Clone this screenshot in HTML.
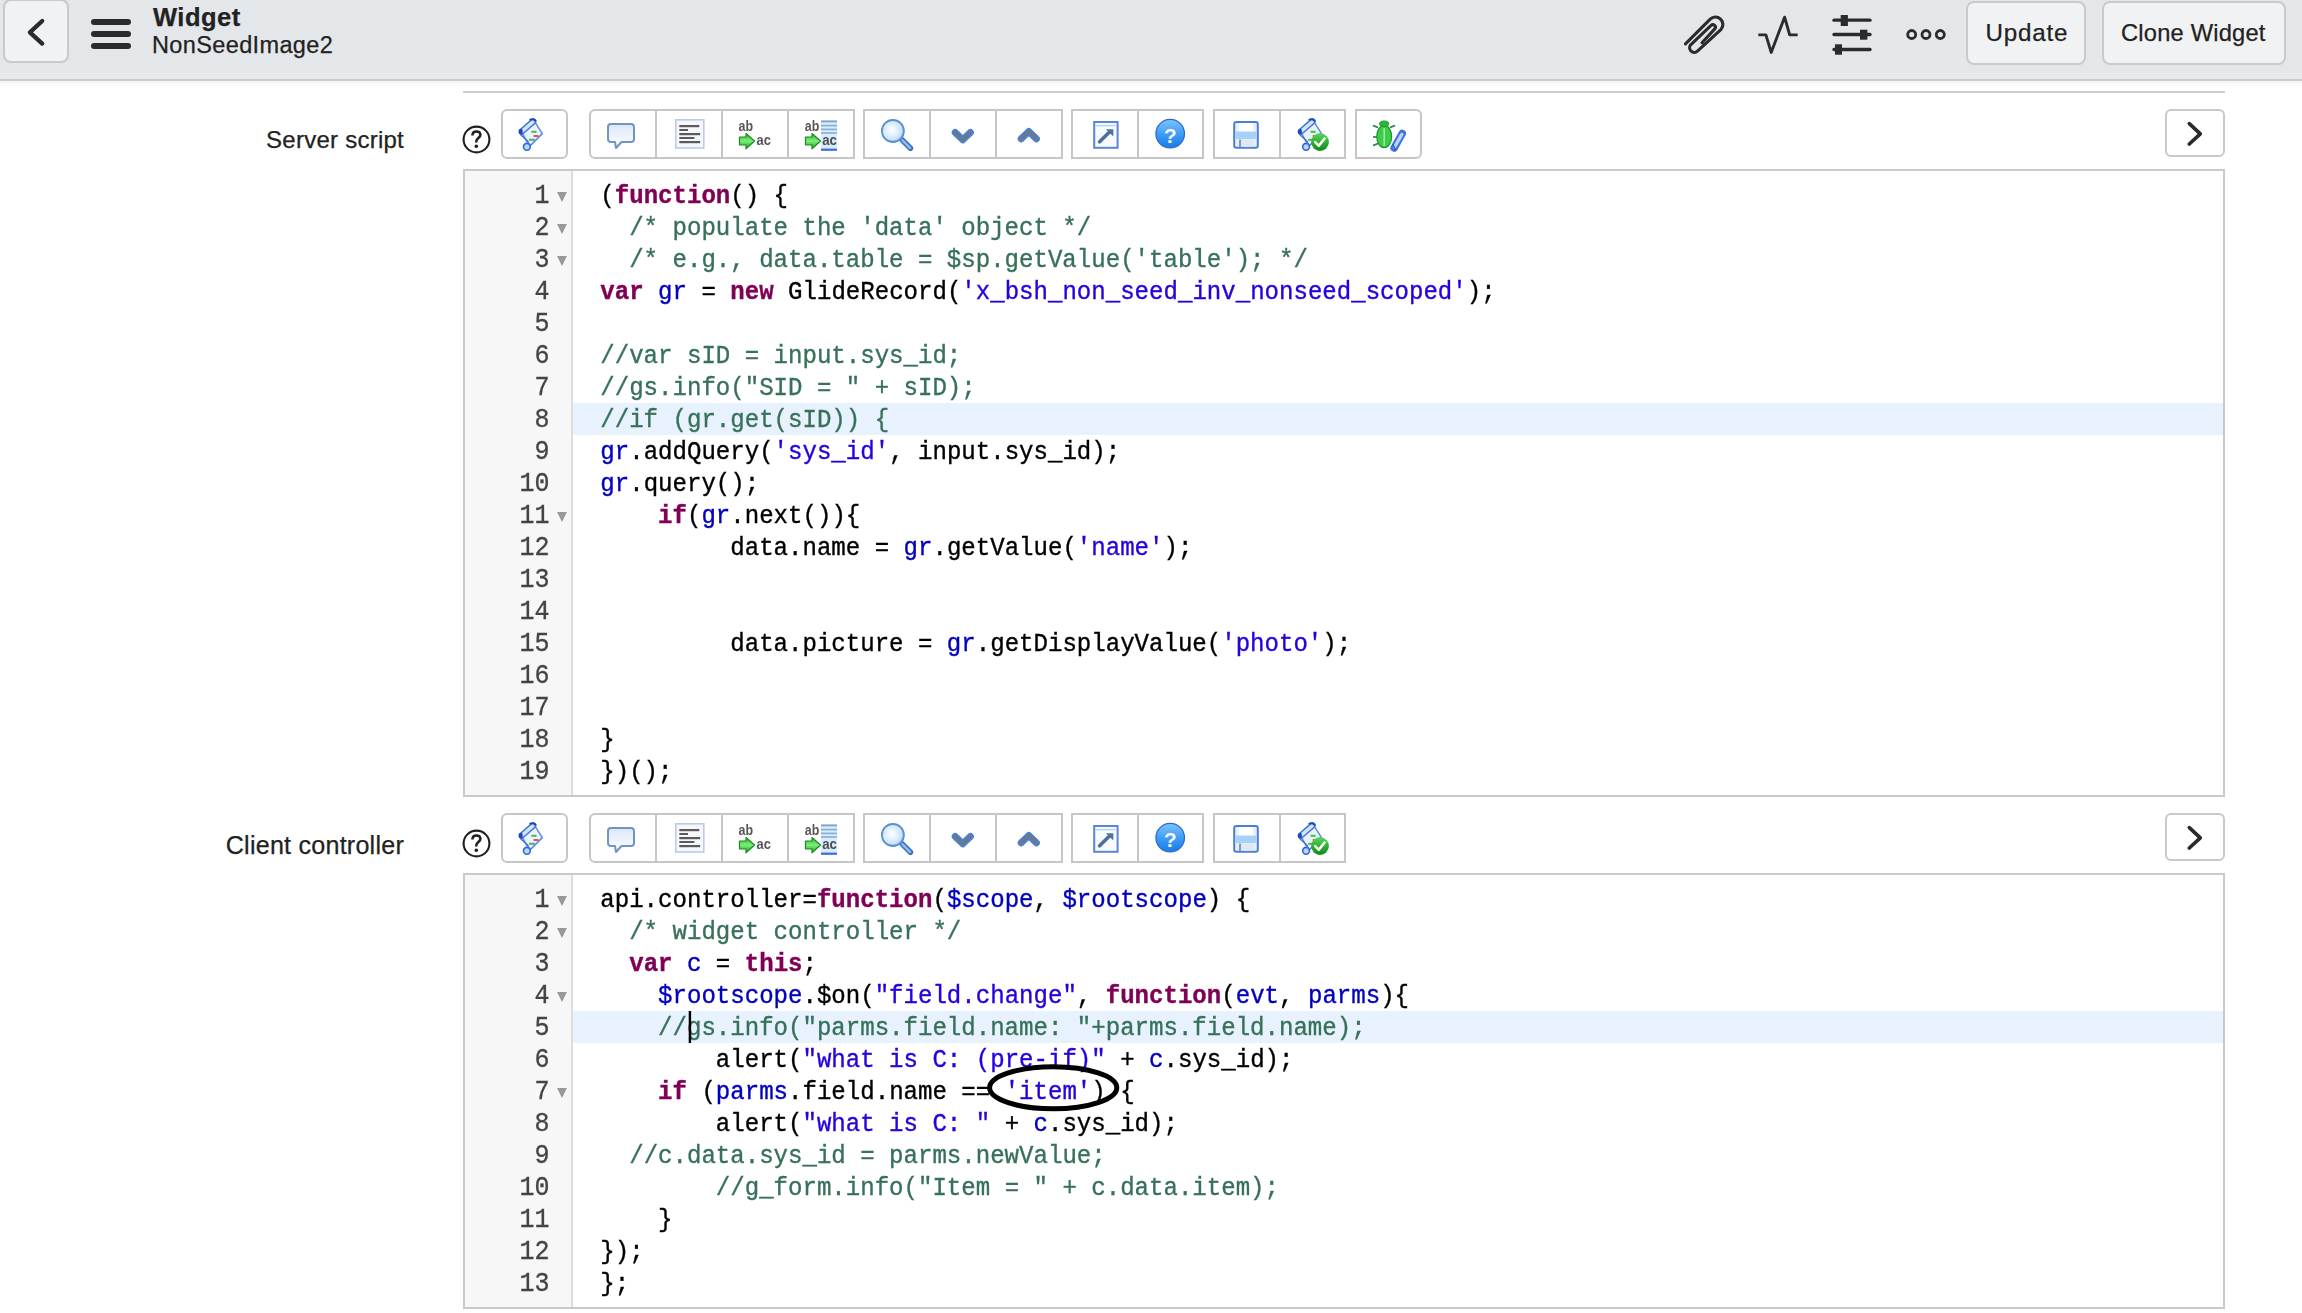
<!DOCTYPE html>
<html><head><meta charset="utf-8">
<style>
*{box-sizing:border-box}
html,body{margin:0;padding:0}
body{width:2302px;height:1313px;overflow:hidden;background:#fff;position:relative;font-family:"Liberation Sans",sans-serif;color:#2b2b2b}
.a{position:absolute}
#hdr{left:0;top:0;width:2302px;height:81px;background:#e4e7ea;border-bottom:2px solid #c9cbcd}
#shadow{left:0;top:81px;width:2302px;height:6px;background:linear-gradient(rgba(0,0,0,0.05),rgba(0,0,0,0))}
.hbtn{background:#f1f2f4;border:2px solid #c8cacc;border-radius:8px}
.lbl{white-space:nowrap;color:#222;line-height:32px;-webkit-text-stroke:0.25px #222}
.tb{border:2px solid #c6c6c6;background:#fff}
.rall{border-radius:6px}
.rleft{border-radius:6px 0 0 6px}
.rright{border-radius:0 6px 6px 0}
.ebtn{border:2px solid #c8c8c8;border-radius:6px;background:#fff}
.ed{border:2px solid #c9c9c9;background:#fff}
.gut{background:#f7f7f7;border-right:2px solid #ddd}
.code{font-family:"Liberation Mono",monospace;font-size:24.07px;line-height:32px;white-space:pre;color:#000;transform:scaleY(1.08);transform-origin:0 6px;-webkit-text-stroke:0.35px currentColor}
.ln{font-family:"Liberation Mono",monospace;font-size:25px;line-height:32px;white-space:pre;color:#444;text-align:right;transform:scaleY(1.11);transform-origin:0 6px;-webkit-text-stroke:0.3px currentColor}
.fold{width:0;height:0;border-left:5px solid transparent;border-right:5px solid transparent;border-top:10px solid #999}
.k{color:#7f0055;font-weight:bold}
.s{color:#2800e0}
.c{color:#377159}
.v{color:#0000c0}
.hl{background:#e8f2ff}

</style></head><body>

<div id="hdr" class="a"></div>
<div id="shadow" class="a"></div>
<div class="a" style="left:0;top:73px;width:2302px;height:6px;background:#e7eaed"></div>
<div class="a hbtn" style="left:3px;top:-1px;width:66px;height:64px"></div>
<div class="a lbl" style="left:153px;top:1px;font-size:25.5px;font-weight:bold;letter-spacing:0.5px">Widget</div>
<div class="a lbl" style="left:152px;top:28.5px;font-size:23.5px;letter-spacing:0.37px">NonSeedImage2</div>
<div class="a hbtn" style="left:1966px;top:1px;width:120px;height:64px"></div>
<div class="a lbl" style="left:1985.5px;top:16.5px;font-size:24.2px;letter-spacing:0.8px">Update</div>
<div class="a hbtn" style="left:2102px;top:1px;width:184px;height:64px"></div>
<div class="a lbl" style="left:2121px;top:16.5px;font-size:23.7px;letter-spacing:0.2px">Clone Widget</div>
<div class="a" style="left:463px;top:91px;width:1762px;height:2px;background:#cdcdcd"></div>
<div class="a lbl" style="right:1898px;top:124px;font-size:24px;letter-spacing:0.25px">Server script</div>
<div class="a lbl" style="right:1898px;top:829px;font-size:25.1px;letter-spacing:0.23px">Client controller</div>
<div class="a ebtn" style="left:2165px;top:109px;width:60px;height:48px"></div>
<div class="a ebtn" style="left:2165px;top:813px;width:60px;height:48px"></div>

<div class="a tb rall" style="left:501px;top:109px;width:67px;height:50px"></div>
<div class="a tb rleft" style="left:589px;top:109px;width:266px;height:50px"></div>
<div class="a" style="left:655px;top:109px;width:2px;height:50px;background:#c6c6c6"></div>
<div class="a" style="left:721px;top:109px;width:2px;height:50px;background:#c6c6c6"></div>
<div class="a" style="left:787px;top:109px;width:2px;height:50px;background:#c6c6c6"></div>
<div class="a tb " style="left:863px;top:109px;width:200px;height:50px"></div>
<div class="a" style="left:929px;top:109px;width:2px;height:50px;background:#c6c6c6"></div>
<div class="a" style="left:995px;top:109px;width:2px;height:50px;background:#c6c6c6"></div>
<div class="a tb " style="left:1071px;top:109px;width:133px;height:50px"></div>
<div class="a" style="left:1137px;top:109px;width:2px;height:50px;background:#c6c6c6"></div>
<div class="a tb " style="left:1213px;top:109px;width:133px;height:50px"></div>
<div class="a" style="left:1279px;top:109px;width:2px;height:50px;background:#c6c6c6"></div>
<div class="a tb rright" style="left:1355px;top:109px;width:67px;height:50px"></div>
<div class="a ed" style="left:463px;top:169px;width:1762px;height:628px"></div>
<div class="a gut" style="left:465px;top:171px;width:108px;height:624px"></div>
<div class="a hl" style="left:573px;top:403px;width:1650px;height:32px"></div>
<div class="a ln" style="left:480px;top:179px;width:69.5px">1</div>
<div class="a fold" style="left:557px;top:192px"></div>
<div class="a code" style="left:600.3px;top:179.6px">(<span class="k">function</span>() {</div>
<div class="a ln" style="left:480px;top:211px;width:69.5px">2</div>
<div class="a fold" style="left:557px;top:224px"></div>
<div class="a code" style="left:600.3px;top:211.6px"><span class="c">  /* populate the 'data' object */</span></div>
<div class="a ln" style="left:480px;top:243px;width:69.5px">3</div>
<div class="a fold" style="left:557px;top:256px"></div>
<div class="a code" style="left:600.3px;top:243.6px"><span class="c">  /* e.g., data.table = $sp.getValue('table'); */</span></div>
<div class="a ln" style="left:480px;top:275px;width:69.5px">4</div>
<div class="a code" style="left:600.3px;top:275.6px"><span class="k">var</span> <span class="v">gr</span> = <span class="k">new</span> GlideRecord(<span class="s">'x_bsh_non_seed_inv_nonseed_scoped'</span>);</div>
<div class="a ln" style="left:480px;top:307px;width:69.5px">5</div>
<div class="a ln" style="left:480px;top:339px;width:69.5px">6</div>
<div class="a code" style="left:600.3px;top:339.6px"><span class="c">//var sID = input.sys_id;</span></div>
<div class="a ln" style="left:480px;top:371px;width:69.5px">7</div>
<div class="a code" style="left:600.3px;top:371.6px"><span class="c">//gs.info("SID = " + sID);</span></div>
<div class="a ln" style="left:480px;top:403px;width:69.5px">8</div>
<div class="a code" style="left:600.3px;top:403.6px"><span class="c">//if (gr.get(sID)) {</span></div>
<div class="a ln" style="left:480px;top:435px;width:69.5px">9</div>
<div class="a code" style="left:600.3px;top:435.6px"><span class="v">gr</span>.addQuery(<span class="s">'sys_id'</span>, input.sys_id);</div>
<div class="a ln" style="left:480px;top:467px;width:69.5px">10</div>
<div class="a code" style="left:600.3px;top:467.6px"><span class="v">gr</span>.query();</div>
<div class="a ln" style="left:480px;top:499px;width:69.5px">11</div>
<div class="a fold" style="left:557px;top:512px"></div>
<div class="a code" style="left:600.3px;top:499.6px">    <span class="k">if</span>(<span class="v">gr</span>.next()){</div>
<div class="a ln" style="left:480px;top:531px;width:69.5px">12</div>
<div class="a code" style="left:600.3px;top:531.6px">         data.name = <span class="v">gr</span>.getValue(<span class="s">'name'</span>);</div>
<div class="a ln" style="left:480px;top:563px;width:69.5px">13</div>
<div class="a ln" style="left:480px;top:595px;width:69.5px">14</div>
<div class="a ln" style="left:480px;top:627px;width:69.5px">15</div>
<div class="a code" style="left:600.3px;top:627.6px">         data.picture = <span class="v">gr</span>.getDisplayValue(<span class="s">'photo'</span>);</div>
<div class="a ln" style="left:480px;top:659px;width:69.5px">16</div>
<div class="a ln" style="left:480px;top:691px;width:69.5px">17</div>
<div class="a ln" style="left:480px;top:723px;width:69.5px">18</div>
<div class="a code" style="left:600.3px;top:723.6px">}</div>
<div class="a ln" style="left:480px;top:755px;width:69.5px">19</div>
<div class="a code" style="left:600.3px;top:755.6px">})();</div>
<div class="a tb rall" style="left:501px;top:813px;width:67px;height:50px"></div>
<div class="a tb rleft" style="left:589px;top:813px;width:266px;height:50px"></div>
<div class="a" style="left:655px;top:813px;width:2px;height:50px;background:#c6c6c6"></div>
<div class="a" style="left:721px;top:813px;width:2px;height:50px;background:#c6c6c6"></div>
<div class="a" style="left:787px;top:813px;width:2px;height:50px;background:#c6c6c6"></div>
<div class="a tb " style="left:863px;top:813px;width:200px;height:50px"></div>
<div class="a" style="left:929px;top:813px;width:2px;height:50px;background:#c6c6c6"></div>
<div class="a" style="left:995px;top:813px;width:2px;height:50px;background:#c6c6c6"></div>
<div class="a tb " style="left:1071px;top:813px;width:133px;height:50px"></div>
<div class="a" style="left:1137px;top:813px;width:2px;height:50px;background:#c6c6c6"></div>
<div class="a tb " style="left:1213px;top:813px;width:133px;height:50px"></div>
<div class="a" style="left:1279px;top:813px;width:2px;height:50px;background:#c6c6c6"></div>
<div class="a ed" style="left:463px;top:873px;width:1762px;height:436px"></div>
<div class="a gut" style="left:465px;top:875px;width:108px;height:432px"></div>
<div class="a hl" style="left:573px;top:1011px;width:1650px;height:32px"></div>
<div class="a ln" style="left:480px;top:883px;width:69.5px">1</div>
<div class="a fold" style="left:557px;top:896px"></div>
<div class="a code" style="left:600.3px;top:883.6px">api.controller=<span class="k">function</span>(<span class="v">$scope</span>, <span class="v">$rootscope</span>) {</div>
<div class="a ln" style="left:480px;top:915px;width:69.5px">2</div>
<div class="a fold" style="left:557px;top:928px"></div>
<div class="a code" style="left:600.3px;top:915.6px"><span class="c">  /* widget controller */</span></div>
<div class="a ln" style="left:480px;top:947px;width:69.5px">3</div>
<div class="a code" style="left:600.3px;top:947.6px">  <span class="k">var</span> <span class="v">c</span> = <span class="k">this</span>;</div>
<div class="a ln" style="left:480px;top:979px;width:69.5px">4</div>
<div class="a fold" style="left:557px;top:992px"></div>
<div class="a code" style="left:600.3px;top:979.6px">    <span class="v">$rootscope</span>.$on(<span class="s">"field.change"</span>, <span class="k">function</span>(<span class="v">evt</span>, <span class="v">parms</span>){</div>
<div class="a ln" style="left:480px;top:1011px;width:69.5px">5</div>
<div class="a code" style="left:600.3px;top:1011.6px">    <span class="c">//gs.info("parms.field.name: "+parms.field.name);</span></div>
<div class="a ln" style="left:480px;top:1043px;width:69.5px">6</div>
<div class="a code" style="left:600.3px;top:1043.6px">        alert(<span class="s">"what is C: (pre-if)"</span> + <span class="v">c</span>.sys_id);</div>
<div class="a ln" style="left:480px;top:1075px;width:69.5px">7</div>
<div class="a fold" style="left:557px;top:1088px"></div>
<div class="a code" style="left:600.3px;top:1075.6px">    <span class="k">if</span> (<span class="v">parms</span>.field.name == <span class="s">'item'</span>) {</div>
<div class="a ln" style="left:480px;top:1107px;width:69.5px">8</div>
<div class="a code" style="left:600.3px;top:1107.6px">        alert(<span class="s">"what is C: "</span> + <span class="v">c</span>.sys_id);</div>
<div class="a ln" style="left:480px;top:1139px;width:69.5px">9</div>
<div class="a code" style="left:600.3px;top:1139.6px">  <span class="c">//c.data.sys_id = parms.newValue;</span></div>
<div class="a ln" style="left:480px;top:1171px;width:69.5px">10</div>
<div class="a code" style="left:600.3px;top:1171.6px">        <span class="c">//g_form.info("Item = " + c.data.item);</span></div>
<div class="a ln" style="left:480px;top:1203px;width:69.5px">11</div>
<div class="a code" style="left:600.3px;top:1203.6px">    }</div>
<div class="a ln" style="left:480px;top:1235px;width:69.5px">12</div>
<div class="a code" style="left:600.3px;top:1235.6px">});</div>
<div class="a ln" style="left:480px;top:1267px;width:69.5px">13</div>
<div class="a code" style="left:600.3px;top:1267.6px">};</div>
<svg class="a" style="left:0;top:0" width="2302" height="1313" viewBox="0 0 2302 1313">
<g fill="none" stroke="#2b2b2b" stroke-linecap="round" stroke-linejoin="round">
 <polyline points="42.2,21 29.9,32.3 42.2,43.6" stroke-width="4.3"/>
 <line x1="94" y1="22" x2="128" y2="22" stroke-width="6"/>
 <line x1="94" y1="34" x2="128" y2="34" stroke-width="6"/>
 <line x1="94" y1="46" x2="128" y2="46" stroke-width="6"/>
 <path d="M1686.5 43.3 L1709.85 20 A7.05 7.05 0 0 1 1720.15 29.6 L1697.8 50.2 A4.4 4.4 0 0 1 1691.4 44.2 L1710.65 25.96 A2.4 2.4 0 0 1 1714.15 29.24 L1702.1 42.25" stroke-width="2.9" transform="translate(1703.8,34.7) scale(1.06) translate(-1703.8,-34.7)"/>
 <polyline points="1758.3,34.9 1765.9,34.9 1771.2,52.4 1784.6,17.2 1789.7,34.9 1797.7,34.9" stroke-width="2.9" stroke-linecap="butt" stroke-linejoin="round"/>
 <line x1="1834" y1="20.2" x2="1870" y2="20.2" stroke-width="3.3"/>
 <line x1="1834" y1="34.5" x2="1870" y2="34.5" stroke-width="3.3"/>
 <line x1="1834" y1="49.5" x2="1870" y2="49.5" stroke-width="3.3"/>
 <circle cx="1911.7" cy="34.5" r="4" stroke-width="2.8"/>
 <circle cx="1926" cy="34.5" r="4" stroke-width="2.8"/>
 <circle cx="1940.3" cy="34.5" r="4" stroke-width="2.8"/>
 <circle cx="476.5" cy="139.5" r="12.9" stroke-width="2.1" stroke="#1e1e1e"/>
 <circle cx="476.5" cy="843.5" r="12.9" stroke-width="2.1" stroke="#1e1e1e"/>
 <path d="M472.4 135.6 C472.4 132.7 474.3 131.4 476.4 131.4 C478.7 131.4 480.4 132.8 480.4 135 C480.4 137.6 476.3 138.4 476.3 141.2 L476.3 142.4" stroke-width="2.5" stroke="#1e1e1e" stroke-linecap="butt"/>
 <path d="M472.4 839.6 C472.4 836.7 474.3 835.4 476.4 835.4 C478.7 835.4 480.4 836.8 480.4 839 C480.4 841.6 476.3 842.4 476.3 845.2 L476.3 846.4" stroke-width="2.5" stroke="#1e1e1e" stroke-linecap="butt"/>
 <polyline points="2189.3,123.6 2200.3,133.8 2189.3,144" stroke-width="3.7"/>
 <polyline points="2189.3,827.6 2200.3,837.8 2189.3,848" stroke-width="3.7"/>
</g>
<g fill="#2b2b2b">
 <rect x="1840.7" y="15" width="7.2" height="11"/>
 <rect x="1860" y="29.7" width="7.4" height="10"/>
 <rect x="1835" y="44.3" width="7" height="10.4"/>
</g>
<circle cx="476.3" cy="146.3" r="1.75" fill="#1e1e1e"/>
<circle cx="476.3" cy="850.3" r="1.75" fill="#1e1e1e"/>
<defs>
 <filter id="soft" x="-10%" y="-10%" width="120%" height="120%"><feGaussianBlur stdDeviation="0.45"/></filter>
 <linearGradient id="gBub" x1="0" y1="0" x2="0" y2="1"><stop offset="0" stop-color="#dce7f6"/><stop offset="1" stop-color="#ffffff"/></linearGradient>
 <radialGradient id="gMag" cx="0.45" cy="0.45" r="0.6"><stop offset="0" stop-color="#ffffff"/><stop offset="0.7" stop-color="#cfe6ff"/><stop offset="1" stop-color="#8cc0fa"/></radialGradient>
 <linearGradient id="gHelp" x1="0" y1="0" x2="0" y2="1"><stop offset="0" stop-color="#7cc4ff"/><stop offset="0.55" stop-color="#3b9af5"/><stop offset="1" stop-color="#1a7ae8"/></linearGradient>
 <linearGradient id="gGreen" x1="0" y1="0" x2="0" y2="1"><stop offset="0" stop-color="#5ad65a"/><stop offset="1" stop-color="#0d8a12"/></linearGradient>
 <linearGradient id="gArrow" x1="0" y1="0" x2="0" y2="1"><stop offset="0" stop-color="#2fb82f"/><stop offset="0.5" stop-color="#7af07a"/><stop offset="1" stop-color="#1f9a1f"/></linearGradient>
 <g id="scroll">
  <polygon points="522.5,133.5 535.5,122.8 542.3,133.6 530.3,145.6 526.5,141" fill="#eaf2ff" stroke="#5d8ae2" stroke-width="1.5" stroke-linejoin="round"/>
  <line x1="521.6" y1="131.6" x2="533.4" y2="121.2" stroke="#4577e0" stroke-width="6.2" stroke-linecap="round"/>
  <line x1="522.4" y1="131" x2="533" y2="121.7" stroke="#d4e5ff" stroke-width="3.4" stroke-linecap="round"/>
  <ellipse cx="520.8" cy="131.8" rx="1.9" ry="3" fill="#1d48b8"/>
  <path d="M530.2 119.6 Q533 118.6 535.4 120.8" stroke="#1d48b8" stroke-width="2" fill="none" stroke-linecap="round"/>
  <line x1="520.5" y1="134.6" x2="528.6" y2="142" stroke="#3f6fd8" stroke-width="1.4"/>
  <circle cx="526.9" cy="146.8" r="3.4" fill="#b4d8ff" stroke="#3366d6" stroke-width="1.6"/>
  <line x1="531.4" y1="131.8" x2="536.5" y2="131.8" stroke="#46b84a" stroke-width="2"/>
  <line x1="529.1" y1="139.8" x2="534.8" y2="139.8" stroke="#46b84a" stroke-width="2"/>
  <line x1="533.5" y1="136" x2="538.5" y2="136" stroke="#cc4a3a" stroke-width="1.8"/>
 </g>
</defs>
<g id="tbi" filter="url(#soft)">
 <use href="#scroll"/>
 <!-- comment bubble -->
 <path d="M611 124 H631 Q634 124 634 127 V139 Q634 142 631 142 H621.5 L616 148 L615 142 H611 Q608 142 608 139 V127 Q608 124 611 124 Z" fill="url(#gBub)" stroke="#6e95c6" stroke-width="2" stroke-linejoin="round"/>
 <!-- format -->
 <rect x="675.8" y="119.8" width="28" height="28.2" fill="#f5f7fb" stroke="#b9caee" stroke-width="1.6"/>
 <g fill="#5a5a5a">
  <rect x="679.3" y="125" width="20" height="2.2"/>
  <rect x="679.3" y="129" width="8.7" height="2"/>
  <rect x="679.3" y="133" width="20.9" height="2.2"/>
  <rect x="679.3" y="137" width="15.1" height="2"/>
  <rect x="679.3" y="141" width="20.9" height="2.2"/>
 </g>
 <!-- replace -->
 <g font-family="Liberation Sans" font-weight="bold" fill="#575757" lengthAdjust="spacingAndGlyphs">
  <text x="738.6" y="130.7" font-size="15.5" textLength="14.5" lengthAdjust="spacingAndGlyphs">ab</text>
  <text x="756.6" y="145.3" font-size="15" textLength="14.4" lengthAdjust="spacingAndGlyphs">ac</text>
  <text x="804.8" y="130.7" font-size="15.5" textLength="14.5" lengthAdjust="spacingAndGlyphs">ab</text>
 </g>
 <polygon points="739.5,137 746,137 746,133.5 754.5,141 746,148.8 746,145 739.5,145" fill="url(#gArrow)" stroke="#1b8a1b" stroke-width="1.2" stroke-linejoin="round"/>
 <g>
  <rect x="821" y="120.5" width="16" height="30" fill="#d6ecff"/>
  <rect x="821" y="120.5" width="16" height="1.8" fill="#7f9fc8"/>
  <rect x="821" y="124.8" width="16" height="1.6" fill="#8aaad0"/>
  <rect x="821" y="128.6" width="16" height="1.6" fill="#8aaad0"/>
  <rect x="821" y="132.2" width="16" height="1.6" fill="#8aaad0"/>
  <rect x="821" y="148.6" width="16" height="2.2" fill="#3b6fd2"/>
  <text x="822.2" y="145.3" font-family="Liberation Sans" font-weight="bold" font-size="14.5" textLength="14.8" lengthAdjust="spacingAndGlyphs" fill="#4e4e4e">ac</text>
 </g>
 <polygon points="805.5,137 812,137 812,133.5 820.5,141 812,148.8 812,145 805.5,145" fill="url(#gArrow)" stroke="#1b8a1b" stroke-width="1.2" stroke-linejoin="round"/>
 <!-- magnifier -->
 <line x1="902" y1="139.8" x2="910.5" y2="148.3" stroke="#3f6fb8" stroke-width="5.5" stroke-linecap="round"/>
 <line x1="902.5" y1="140.3" x2="910" y2="147.8" stroke="#8cbcf4" stroke-width="2.6" stroke-linecap="round"/>
 <circle cx="892.9" cy="131" r="11" fill="url(#gMag)" stroke="#5b8fd0" stroke-width="1.8"/>
 <!-- chevrons -->
 <polyline points="955.2,132.4 962.8,139.8 970.4,132.4" fill="none" stroke="#4d80c8" stroke-width="7" stroke-linecap="round" stroke-linejoin="round"/>
 <polyline points="955.2,132.4 962.8,139.8 970.4,132.4" fill="none" stroke="#6d7785" stroke-width="2.6" stroke-linecap="round" stroke-linejoin="round"/>
 <polyline points="1021.2,138.8 1028.8,131.4 1036.4,138.8" fill="none" stroke="#4d80c8" stroke-width="7" stroke-linecap="round" stroke-linejoin="round"/>
 <polyline points="1021.2,138.8 1028.8,131.4 1036.4,138.8" fill="none" stroke="#6d7785" stroke-width="2.6" stroke-linecap="round" stroke-linejoin="round"/>
 <!-- popout -->
 <rect x="1094.2" y="122" width="23.4" height="25.8" fill="#f7faff" stroke="#5a86d8" stroke-width="2"/>
 <line x1="1095.2" y1="125.6" x2="1116.6" y2="125.6" stroke="#bcd4f6" stroke-width="1.6"/>
 <line x1="1099.6" y1="141.8" x2="1109.5" y2="131.9" stroke="#4f6f9d" stroke-width="3.6" stroke-linecap="round"/>
 <polygon points="1106,129.3 1113.3,129.3 1113.3,136.6" fill="#4f6f9d"/>
 <!-- help -->
 <circle cx="1170.2" cy="133.7" r="14.3" fill="url(#gHelp)" stroke="#2a6ccc" stroke-width="1.2"/>
 <text x="1170.4" y="142.8" font-family="Liberation Sans" font-weight="bold" font-size="21" fill="#fff" text-anchor="middle">?</text>
 <!-- save -->
 <rect x="1234.2" y="122" width="23.6" height="25.8" rx="2" fill="#e6f0fb" stroke="#4a7fd8" stroke-width="2"/>
 <rect x="1238.8" y="123.2" width="14.2" height="8.4" fill="#ffffff"/>
 <rect x="1235.4" y="131.6" width="21.2" height="7.4" fill="#a6d2fa"/>
 <rect x="1238.6" y="139.6" width="14.8" height="7.2" fill="#dfe7f2"/>
 <line x1="1240" y1="139.6" x2="1240" y2="147" stroke="#56648a" stroke-width="1.2"/>
 <!-- script check -->
 <use href="#scroll" transform="translate(779.2,0)"/>
 <circle cx="1320" cy="142" r="8.9" fill="url(#gGreen)"/>
 <polyline points="1315.2,142.2 1318.8,145.8 1324.6,138.4" fill="none" stroke="#f2fff2" stroke-width="2.6" stroke-linecap="round" stroke-linejoin="round"/>
</g>
<g id="bug" filter="url(#soft)">
 <g stroke="#2a7a32" stroke-width="1.6">
  <line x1="1373" y1="125.5" x2="1378" y2="127.5"/>
  <line x1="1373" y1="137" x2="1377.5" y2="137"/>
  <line x1="1373" y1="145.5" x2="1378" y2="143.5"/>
  <line x1="1395" y1="125.5" x2="1390" y2="127.5"/>
 </g>
 <ellipse cx="1384.2" cy="136.5" rx="7.4" ry="11.2" fill="#3ccc4c" stroke="#1c9c2c" stroke-width="1.3"/>
 <ellipse cx="1384.2" cy="123.8" rx="4.6" ry="2.8" fill="#2eb43e" stroke="#1c9c2c" stroke-width="1"/>
 <line x1="1384.2" y1="128" x2="1384.2" y2="146" stroke="#9ae8a4" stroke-width="1.6"/>
 <line x1="1394.2" y1="148" x2="1402.2" y2="133.5" stroke="#3f73e0" stroke-width="7.6" stroke-linecap="round"/>
 <line x1="1394.6" y1="147" x2="1401.8" y2="134.5" stroke="#b9d5ff" stroke-width="3.4" stroke-linecap="round"/>
 <line x1="1392.5" y1="144" x2="1396" y2="150.5" stroke="#2a55c8" stroke-width="1.4"/>
</g>
<use href="#tbi" transform="translate(0,704)"/>

<rect x="688.7" y="1011" width="2.4" height="32" fill="#000"/>
<ellipse cx="1053.2" cy="1087.8" rx="63.6" ry="21" fill="none" stroke="#000" stroke-width="5"/>
</svg>


</body></html>
